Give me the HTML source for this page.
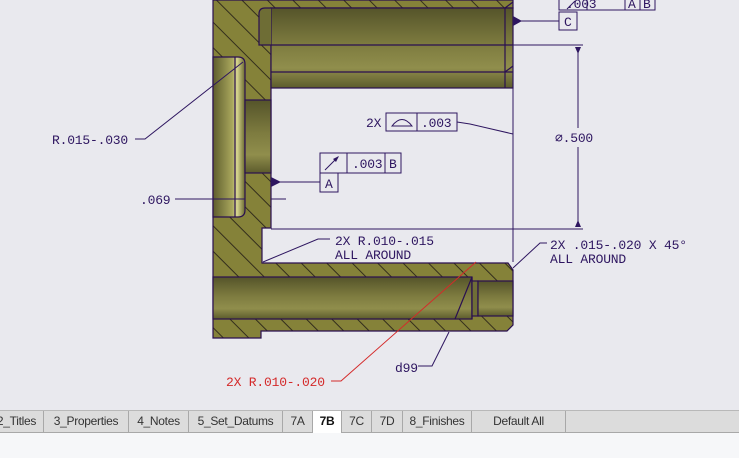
<!DOCTYPE html>
<html><head><meta charset="utf-8"><style>
html,body{margin:0;padding:0;width:739px;height:458px;overflow:hidden;background:#e9e9ee;font-family:"Liberation Sans",sans-serif}
svg{position:absolute;left:0;top:0}
.t{font-family:"Liberation Mono",monospace;font-size:13px;fill:#2e1660;letter-spacing:-0.2px}
#tabs{position:absolute;left:0;top:410px;width:739px;height:23px;background:#dcdcdc;border-top:1px solid #b8b8b8;border-bottom:1px solid #a8a8a8;box-sizing:border-box}
.tab{position:absolute;top:0;height:21px;line-height:21px;font-size:12px;color:#333;text-align:center;border-right:1px solid #a8a8a8;box-sizing:border-box;letter-spacing:-0.3px}
#bot{position:absolute;left:0;top:433px;width:739px;height:25px;background:#f6f7f9}
</style></head><body>
<svg width="739" height="410" viewBox="0 0 739 410">
<defs>
<pattern id="h" width="18" height="18" patternUnits="userSpaceOnUse" patternTransform="rotate(-45)">
<rect width="18" height="18" fill="#858239"/><line x1="9" y1="0" x2="9" y2="18" stroke="#2a2418" stroke-width="0.9"/>
</pattern>
<linearGradient id="cy" x1="0" y1="0" x2="0" y2="1">
<stop offset="0" stop-color="#55542a"/><stop offset="0.45" stop-color="#7d7b3f"/><stop offset="0.75" stop-color="#908e4c"/><stop offset="1" stop-color="#5c5b2c"/>
</linearGradient>
<linearGradient id="cx" x1="0" y1="0" x2="1" y2="0">
<stop offset="0" stop-color="#5e5d2d"/><stop offset="0.6" stop-color="#a8a65c"/><stop offset="0.75" stop-color="#d8d690"/><stop offset="1" stop-color="#6a692f"/>
</linearGradient>
</defs>
<g stroke="#2a0f50" stroke-width="1.2">
<path d="M213,0 H513 V8 H271 V228 H262 V263 H508 L513,270 V325 L507,331 H261 V338 H213 Z" fill="url(#h)"/>
<rect x="271" y="8" width="242" height="80" fill="url(#cy)"/>
<path d="M271,8 H265 Q259,8 259,14 V45 H271" fill="#6e6d35"/>
<line x1="271" y1="45" x2="513" y2="45"/><line x1="271" y1="72" x2="513" y2="72"/>
<path d="M505,8 L513,2 M505,8 V88 M505,72 L513,66" fill="none"/>
<path d="M213,57 H238 Q245,57 245,64 V210 Q245,217 238,217 H213 Z" fill="url(#cx)"/>
<line x1="235" y1="57" x2="235" y2="217"/>
<rect x="245" y="100" width="26" height="73" fill="url(#cy)"/>
<rect x="213" y="277" width="259" height="42" fill="url(#cy)"/>
<path d="M472,277 L455,319 M472,277 V319" fill="none"/>
<rect x="472" y="281" width="6" height="35" fill="#6f6e36"/>
<rect x="478" y="281" width="35" height="35" fill="url(#cy)"/>
</g>
<g stroke="#2e1660" stroke-width="1" fill="none">
<rect x="559" y="-2" width="28" height="12"/><rect x="587" y="-2" width="38" height="12"/><rect x="625" y="-2" width="15" height="12"/><rect x="640" y="-2" width="15" height="12"/>
<rect x="559" y="12" width="18" height="18"/><line x1="513" y1="21" x2="559" y2="21"/>
<line x1="567" y1="9" x2="575" y2="1"/>
<line x1="513" y1="45" x2="583" y2="45"/><line x1="513" y1="229" x2="583" y2="229"/><line x1="271" y1="229" x2="513" y2="229"/>
<line x1="578" y1="47" x2="578" y2="128"/><line x1="578" y1="147" x2="578" y2="227"/>
<line x1="513" y1="45" x2="513" y2="262"/>
<rect x="386" y="113" width="31" height="18"/><rect x="417" y="113" width="40" height="18"/>
<path d="M392,126 Q402,113 412,126 Z"/>
<polyline points="457,122 470,124 513,134"/>
<rect x="320" y="153" width="27" height="20"/><rect x="347" y="153" width="38" height="20"/><rect x="385" y="153" width="16" height="20"/>
<rect x="320" y="173" width="18" height="19"/>
<line x1="271" y1="182" x2="320" y2="182"/>
<line x1="325" y1="170" x2="338" y2="157"/>
<polyline points="135,139 145,139 243,62"/>
<line x1="175" y1="199" x2="245" y2="199"/><line x1="271" y1="199" x2="286" y2="199"/>
<polyline points="330,239 318,239 263,262"/>
<polyline points="547,243 540,243 513,268"/>
<polyline points="418,366 432,366 449,332"/>
</g>
<g fill="#2e1660">
<path d="M513,16 L522,21 L513,26 Z"/><path d="M271,177 L281,182 L271,187 Z"/>
<path d="M575,47 L578,54 L581,47 Z"/><path d="M575,227 L578,220 L581,227 Z"/>
<path d="M339,156 L333,159 L336,162 Z"/>
</g>
<g stroke="#d42a2a" fill="none" stroke-width="1"><polyline points="331,381 341,381 476,262"/></g>
<text class="t" x="566" y="8">.003</text><text class="t" x="628" y="8">A</text><text class="t" x="643" y="8">B</text>
<text class="t" x="564" y="26">C</text>
<text class="t" x="555" y="142">⌀.500</text>
<text class="t" x="366" y="127">2X</text><text class="t" x="421" y="127">.003</text>
<text class="t" x="352" y="168">.003</text><text class="t" x="389" y="168">B</text>
<text class="t" x="325" y="188">A</text>
<text class="t" x="52" y="144">R.015-.030</text>
<text class="t" x="140" y="204">.069</text>
<text class="t" x="335" y="245">2X R.010-.015</text><text class="t" x="335" y="259">ALL AROUND</text>
<text class="t" x="550" y="249">2X .015-.020 X 45°</text><text class="t" x="550" y="263">ALL AROUND</text>
<text class="t" x="395" y="372">d99</text>
<text class="t" x="226" y="386" style="fill:#d42a2a">2X R.010-.020</text>
</svg>
<div id="tabs">
<div class="tab" style="left:-10px;width:54px">2_Titles</div>
<div class="tab" style="left:44px;width:85px">3_Properties</div>
<div class="tab" style="left:129px;width:60px">4_Notes</div>
<div class="tab" style="left:189px;width:94px">5_Set_Datums</div>
<div class="tab" style="left:283px;width:30px">7A</div>
<div class="tab" style="left:313px;width:29px;background:#fff;font-weight:bold;height:23px;color:#111">7B</div>
<div class="tab" style="left:342px;width:30px">7C</div>
<div class="tab" style="left:372px;width:31px">7D</div>
<div class="tab" style="left:403px;width:69px">8_Finishes</div>
<div class="tab" style="left:472px;width:94px">Default All</div>
</div>
<div id="bot"></div>
</body></html>
